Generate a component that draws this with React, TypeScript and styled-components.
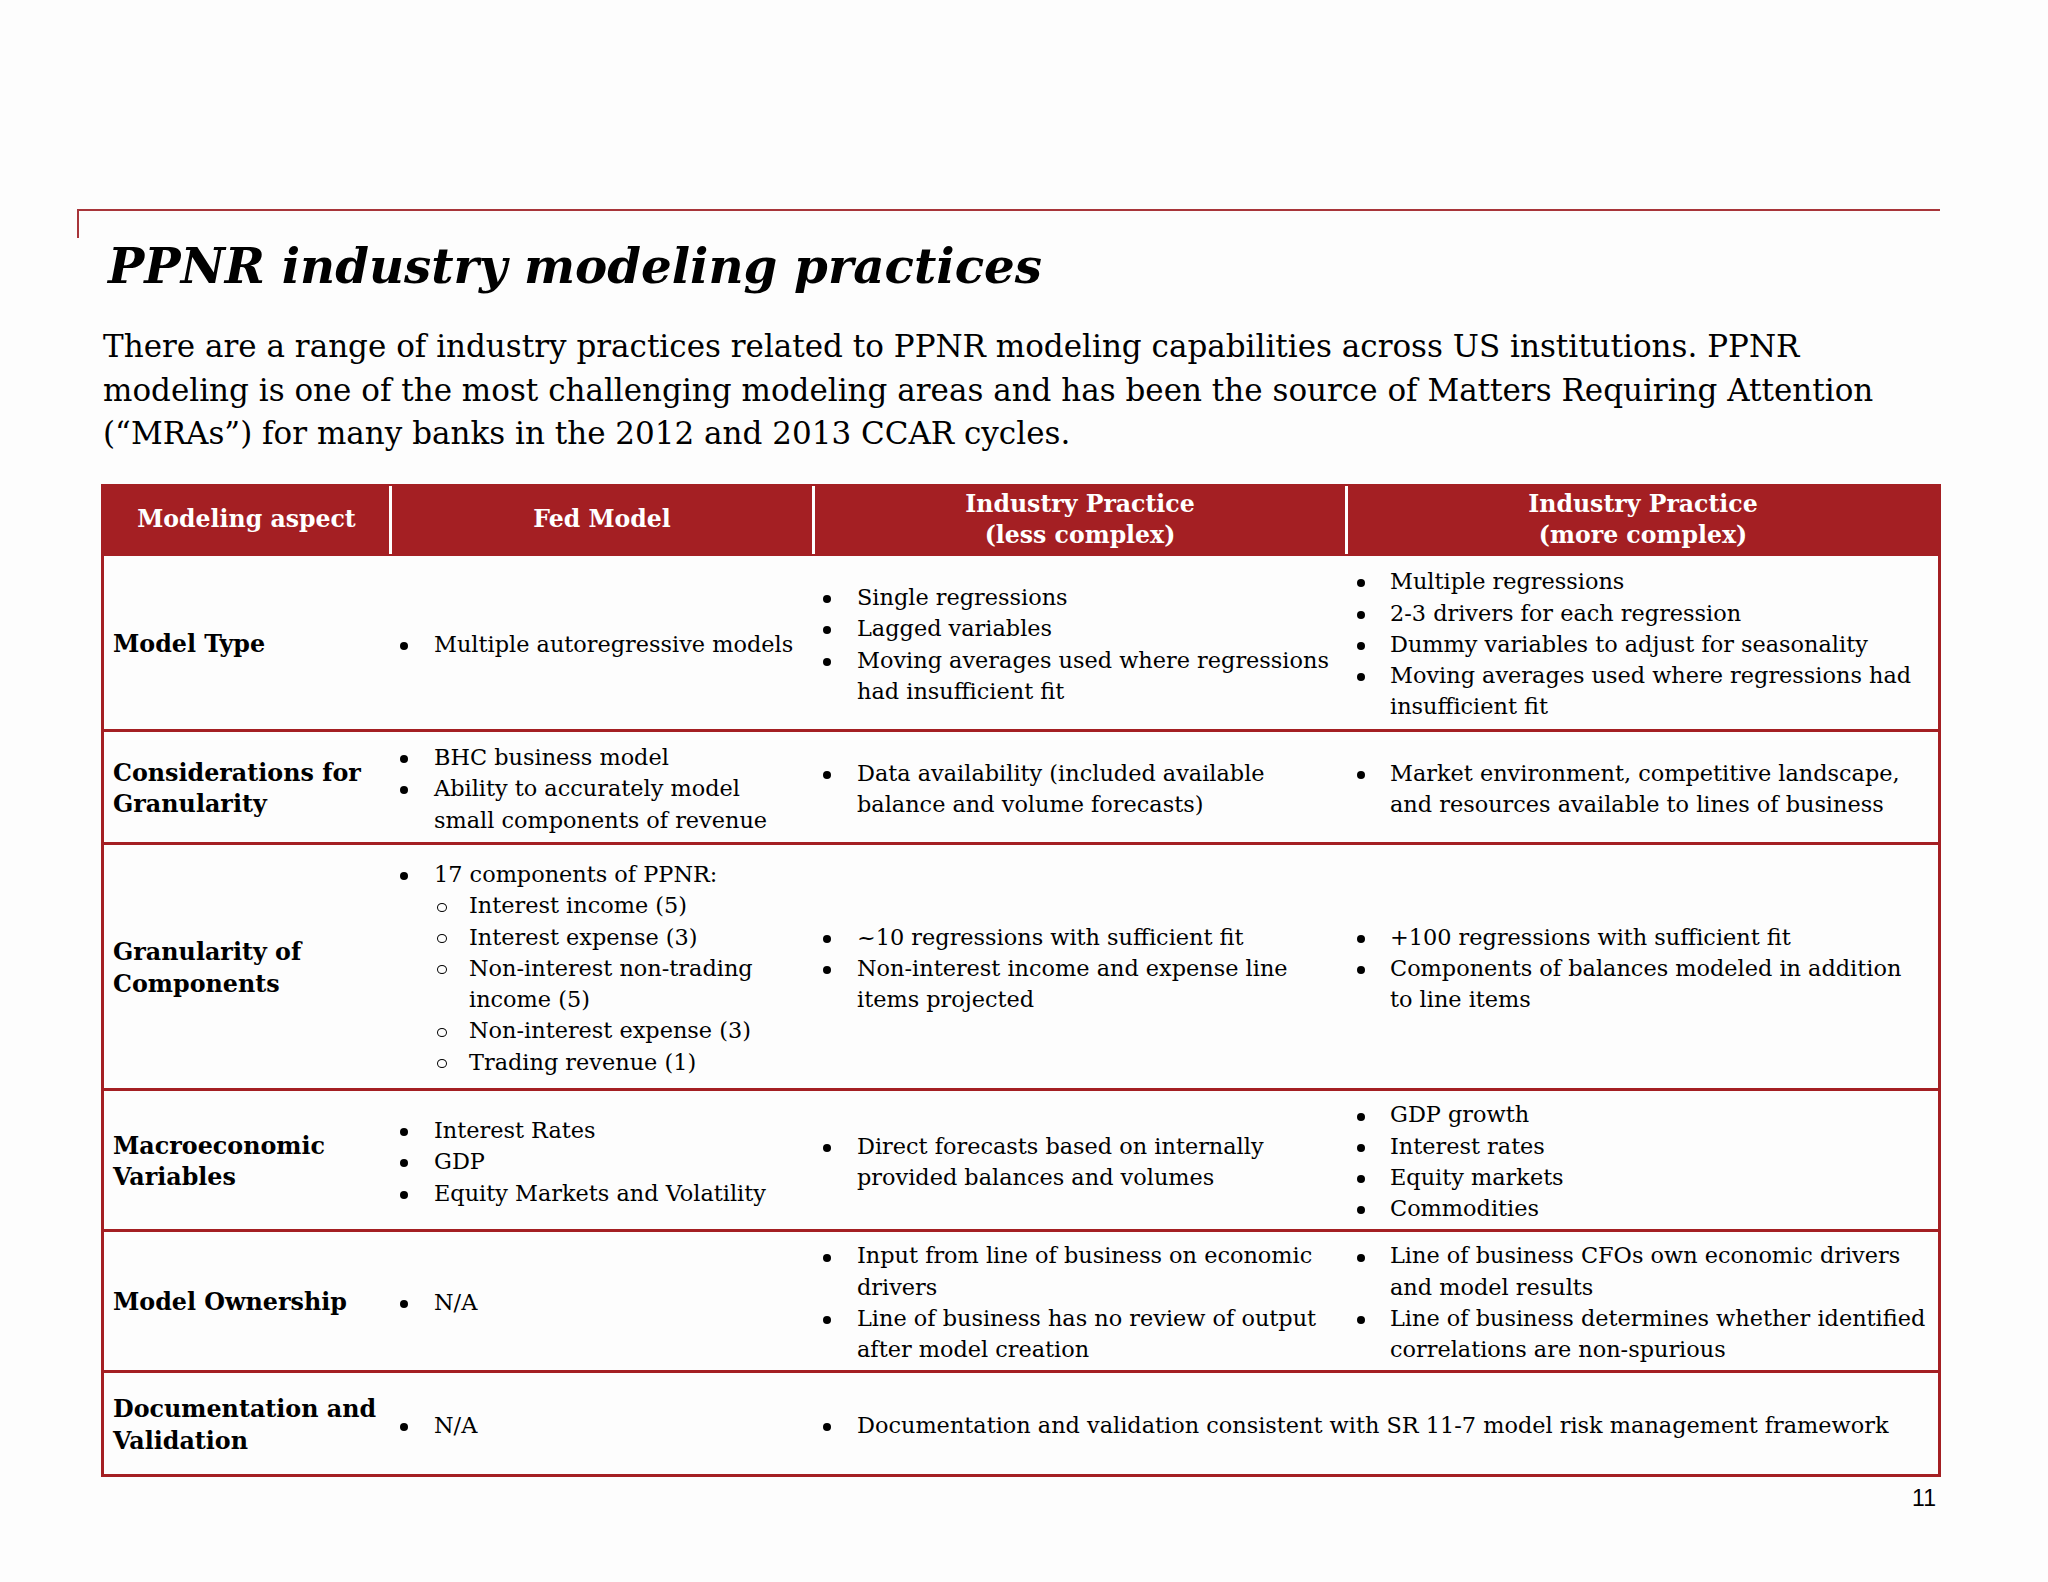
import React from "react";
import styled, { createGlobalStyle } from "styled-components";

const RED = "#a41f23";
const FRAME_RED = "#a8353a";
const SERIF = `"DejaVu Serif", "Liberation Serif", serif`;

const GlobalStyle = createGlobalStyle`
  html, body { margin: 0; padding: 0; background: #ffffff; }
  body { font-family: ${SERIF}; color: #000; }
`;

const Slide = styled.div`
  width: 2048px;
  height: 1582px;
  box-sizing: border-box;
  padding: 209px 0 0 77px;
  background: #fdfdfd;
  display: flex;
  flex-direction: column;
`;

const Frame = styled.div`
  width: 1863px;
  height: 29px;
  box-sizing: border-box;
  border-top: 2px solid ${FRAME_RED};
  border-left: 2px solid ${FRAME_RED};
`;

const Title = styled.h1`
  margin: 0;
  padding-left: 31px;
  font-family: ${SERIF};
  font-weight: bold;
  font-style: italic;
  font-size: 48.3px;
  line-height: 56px;
  white-space: nowrap;
`;

const Intro = styled.p`
  margin: 31px 0 0 26px;
  font-size: 31px;
  line-height: 43.5px;
  white-space: pre;
`;

const Table = styled.div`
  margin: 28px 0 0 24px;
  width: 1840px;
  box-sizing: border-box;
  border-left: 3px solid ${RED};
  border-right: 3px solid ${RED};
  border-bottom: 3px solid ${RED};
`;

const COLS = "285px 423px 533px 1fr";

const HeaderRow = styled.div`
  display: grid;
  grid-template-columns: ${COLS};
  height: 72px;
  box-sizing: border-box;
  padding: 2px 3px;
  margin: 0 -3px;
  background: ${RED};
`;

const HeaderCell = styled.div<{ $divider?: boolean }>`
  display: flex;
  align-items: center;
  justify-content: center;
  text-align: center;
  color: #fff;
  font-weight: bold;
  font-size: 23.6px;
  line-height: 31px;
  white-space: pre;
  border-left: ${(p) => (p.$divider ? "3px solid #fff" : "none")};
`;

const BodyRow = styled.div<{ $h: number; $ruled: boolean }>`
  display: grid;
  grid-template-columns: ${COLS};
  align-items: center;
  height: ${(p) => p.$h}px;
  box-sizing: border-box;
  padding-top: 5px;
  border-top: ${(p) => (p.$ruled ? `3px solid ${RED}` : "none")};
`;

const LabelCell = styled.div`
  padding-left: 9px;
  font-weight: bold;
  font-size: 23.8px;
  line-height: 31.3px;
  white-space: pre;
`;

const ListCell = styled.ul<{ $span?: number }>`
  margin: 0;
  padding: 0;
  list-style: none;
  font-size: 22.4px;
  line-height: 31.3px;
  grid-column: span ${(p) => p.$span ?? 1};
`;

const Item = styled.li`
  display: grid;
  grid-template-columns: 45px auto;
`;

const MarkerBox = styled.span<{ $pad: number }>`
  display: flex;
  align-items: center;
  height: 31.3px;
  padding-left: ${(p) => p.$pad}px;
`;

const Dot = styled.span<{ $hollow?: boolean }>`
  display: block;
  box-sizing: border-box;
  width: ${(p) => (p.$hollow ? 10 : 8)}px;
  height: ${(p) => (p.$hollow ? 9 : 8)}px;
  border-radius: 50%;
  margin-top: 3px;
  background: ${(p) => (p.$hollow ? "transparent" : "#000")};
  border: ${(p) => (p.$hollow ? "1.4px solid #000" : "none")};
`;

const ItemText = styled.span`
  white-space: pre;
`;

const SubList = styled.ul`
  margin: 0;
  padding: 0;
  list-style: none;
  grid-column: 2;
`;

const SubItem = styled.li`
  display: grid;
  grid-template-columns: 35px auto;
`;

const PageNumber = styled.div`
  width: 1859px;
  margin-top: 7px;
  text-align: right;
  font-family: "Liberation Sans", Arial, sans-serif;
  font-size: 23px;
  line-height: 28px;
`;

type Entry = string | { text: string; subs: string[] };
type Row = { label: string; h: number; cells: { items: Entry[]; span?: number }[] };

const rows: Row[] = [
  {
    label: "Model Type",
    h: 173,
    cells: [
      { items: ["Multiple autoregressive models"] },
      {
        items: [
          "Single regressions",
          "Lagged variables",
          "Moving averages used where regressions\nhad insufficient fit",
        ],
      },
      {
        items: [
          "Multiple regressions",
          "2-3 drivers for each regression",
          "Dummy variables to adjust for seasonality",
          "Moving averages used where regressions had\ninsufficient fit",
        ],
      },
    ],
  },
  {
    label: "Considerations for\nGranularity",
    h: 113,
    cells: [
      { items: ["BHC business model", "Ability to accurately model\nsmall components of revenue"] },
      { items: ["Data availability (included available\nbalance and volume forecasts)"] },
      { items: ["Market environment, competitive landscape,\nand resources available to lines of business"] },
    ],
  },
  {
    label: "Granularity of\nComponents",
    h: 246,
    cells: [
      {
        items: [
          {
            text: "17 components of PPNR:",
            subs: [
              "Interest income (5)",
              "Interest expense (3)",
              "Non-interest non-trading\nincome (5)",
              "Non-interest expense (3)",
              "Trading revenue (1)",
            ],
          },
        ],
      },
      { items: ["~10 regressions with sufficient fit", "Non-interest income and expense line\nitems projected"] },
      { items: ["+100 regressions with sufficient fit", "Components of balances modeled in addition\nto line items"] },
    ],
  },
  {
    label: "Macroeconomic\nVariables",
    h: 141,
    cells: [
      { items: ["Interest Rates", "GDP", "Equity Markets and Volatility"] },
      { items: ["Direct forecasts based on internally\nprovided balances and volumes"] },
      { items: ["GDP growth", "Interest rates", "Equity markets", "Commodities"] },
    ],
  },
  {
    label: "Model Ownership",
    h: 141,
    cells: [
      { items: ["N/A"] },
      {
        items: [
          "Input from line of business on economic\ndrivers",
          "Line of business has no review of output\nafter model creation",
        ],
      },
      {
        items: [
          "Line of business CFOs own economic drivers\nand model results",
          "Line of business determines whether identified\ncorrelations are non-spurious",
        ],
      },
    ],
  },
  {
    label: "Documentation and\nValidation",
    h: 104,
    cells: [
      { items: ["N/A"] },
      {
        items: ["Documentation and validation consistent with SR 11-7 model risk management framework"],
        span: 2,
      },
    ],
  },
];

const headers = ["Modeling aspect", "Fed Model", "Industry Practice\n(less complex)", "Industry Practice\n(more complex)"];
const markerPads = [11, 11, 12];

export default function App() {
  return (
    <>
      <GlobalStyle />
      <Slide>
        <Frame />
        <Title>PPNR industry modeling practices</Title>
        <Intro>
          {"There are a range of industry practices related to PPNR modeling capabilities across US institutions. PPNR\nmodeling is one of the most challenging modeling areas and has been the source of Matters Requiring Attention\n(\u201cMRAs\u201d) for many banks in the 2012 and 2013 CCAR cycles."}
        </Intro>
        <Table>
          <HeaderRow>
            {headers.map((h, i) => (
              <HeaderCell key={h} $divider={i > 0}>
                {h}
              </HeaderCell>
            ))}
          </HeaderRow>
          {rows.map((row, ri) => (
            <BodyRow key={row.label} $h={row.h} $ruled={ri > 0}>
              <LabelCell>{row.label}</LabelCell>
              {row.cells.map((cell, ci) => (
                <ListCell key={ci} $span={cell.span}>
                  {cell.items.map((entry, ei) =>
                    typeof entry === "string" ? (
                      <Item key={ei}>
                        <MarkerBox $pad={markerPads[ci]}>
                          <Dot />
                        </MarkerBox>
                        <ItemText>{entry}</ItemText>
                      </Item>
                    ) : (
                      <Item key={ei}>
                        <MarkerBox $pad={markerPads[ci]}>
                          <Dot />
                        </MarkerBox>
                        <ItemText>{entry.text}</ItemText>
                        <SubList>
                          {entry.subs.map((s) => (
                            <SubItem key={s}>
                              <MarkerBox $pad={3}>
                                <Dot $hollow />
                              </MarkerBox>
                              <ItemText>{s}</ItemText>
                            </SubItem>
                          ))}
                        </SubList>
                      </Item>
                    )
                  )}
                </ListCell>
              ))}
            </BodyRow>
          ))}
        </Table>
        <PageNumber>11</PageNumber>
      </Slide>
    </>
  );
}
